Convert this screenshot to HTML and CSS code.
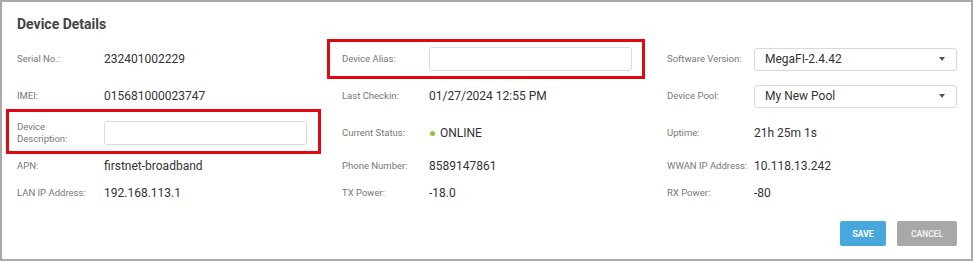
FILE: index.html
```html
<!DOCTYPE html>
<html>
<head>
<meta charset="utf-8">
<link rel="stylesheet" href="styles.css">
</head>
<body>
<div class="panel">
  <h1 class="title">Device Details</h1>
  <div class="grid">
    <div class="field"><span class="label">Serial No.:</span><span class="value">232401002229</span></div>
    <div class="field hl hl-alias"><span class="label">Device Alias:</span><input class="input" type="text"></div>
    <div class="field"><span class="label">Software Version:</span><div class="select"><span>MegaFI-2.4.42</span><span class="caret"></span></div></div>

    <div class="field"><span class="label">IMEI:</span><span class="value">015681000023747</span></div>
    <div class="field"><span class="label">Last Checkin:</span><span class="value">01/27/2024 12:55 PM</span></div>
    <div class="field"><span class="label">Device Pool:</span><div class="select"><span>My New Pool</span><span class="caret"></span></div></div>

    <div class="field hl hl-desc"><span class="label">Device<br>Description:</span><input class="input" type="text"></div>
    <div class="field"><span class="label">Current Status:</span><span class="value"><span class="dot"></span>ONLINE</span></div>
    <div class="field"><span class="label">Uptime:</span><span class="value">21h 25m 1s</span></div>

    <div class="field"><span class="label">APN:</span><span class="value">firstnet-broadband</span></div>
    <div class="field"><span class="label">Phone Number:</span><span class="value">8589147861</span></div>
    <div class="field"><span class="label">WWAN IP Address:</span><span class="value">10.118.13.242</span></div>

    <div class="field"><span class="label">LAN IP Address:</span><span class="value">192.168.113.1</span></div>
    <div class="field"><span class="label">TX Power:</span><span class="value">-18.0</span></div>
    <div class="field"><span class="label">RX Power:</span><span class="value">-80</span></div>
  </div>
  <div class="actions">
    <button class="btn btn-save">SAVE</button>
    <button class="btn btn-cancel">CANCEL</button>
  </div>
</div>
</body>
</html>
```
FILE: styles.css
```css
html, body {
  margin: 0;
  padding: 0;
  background: #ffffff;
}
body {
  font-family: Roboto, "Liberation Sans", Arial, sans-serif;
  color: #333;
}
.panel {
  box-sizing: border-box;
  width: 973px;
  height: 261px;
  border: 2px solid #a9a9a9;
  padding: 12px 14px 0 15px;
  display: flex;
  flex-direction: column;
}
.title {
  margin: 0;
  font-size: 14px;
  line-height: 20px;
  font-weight: 700;
  color: #444;
}
.grid {
  margin-top: 6px;
  display: grid;
  grid-template-columns: 325px 325px 290px;
  grid-template-rows: 38px 36px 38px 28px 26px;
}
.field {
  position: relative;
  display: flex;
  align-items: center;
}
.label {
  width: 87px;
  flex: none;
  font-size: 9.5px;
  line-height: 12px;
  color: #777;
}
.value {
  font-size: 12px;
  color: #333;
  display: flex;
  align-items: center;
}
.dot {
  width: 5px;
  height: 5px;
  border-radius: 50%;
  background: #8dc63f;
  margin: 0 5px 0 1px;
}
.input {
  box-sizing: border-box;
  width: 203px;
  height: 24px;
  border: 1px solid #d9d9d9;
  border-radius: 3px;
  margin: 0;
  padding: 0 8px;
  background: #fff;
  outline: none;
}
.select {
  box-sizing: border-box;
  width: 203px;
  height: 23px;
  border: 1px solid #d9d9d9;
  border-radius: 3px;
  padding: 0 10px 0 10px;
  font-size: 12px;
  color: #333;
  display: flex;
  align-items: center;
  justify-content: space-between;
}
.caret {
  width: 0;
  height: 0;
  border-left: 3px solid transparent;
  border-right: 3px solid transparent;
  border-top: 4px solid #555;
  margin-right: 1px;
}
.hl::after {
  content: "";
  position: absolute;
  border: 3px solid #e30613;
  pointer-events: none;
}
.hl-desc::after {
  left: -11px;
  right: 21px;
  top: -5px;
  bottom: -2px;
}
.hl-alias::after {
  left: -15px;
  right: 22px;
  top: -1px;
  bottom: -1px;
}
.actions {
  margin-top: 15px;
  display: flex;
  justify-content: flex-end;
  gap: 11px;
}
.btn {
  height: 25px;
  border: none;
  border-radius: 2px;
  font-family: Roboto, "Liberation Sans", Arial, sans-serif;
  font-size: 8.5px;
  font-weight: 700;
  padding: 0;
}
.btn-save {
  width: 46px;
  background: #48a8de;
  color: #fff;
}
.btn-cancel {
  width: 60px;
  background: #a8a8a8;
  color: #eeeeee;
}
```
